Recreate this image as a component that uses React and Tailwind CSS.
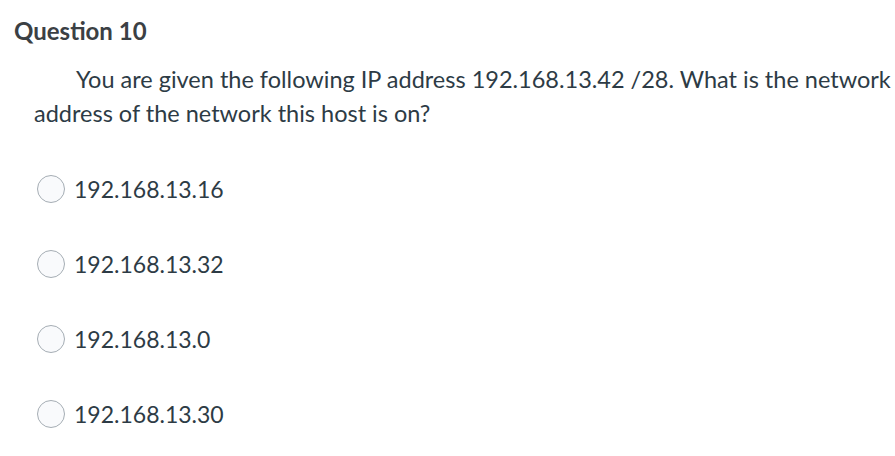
export default function App() {
  const options = ['192.168.13.16', '192.168.13.32', '192.168.13.0', '192.168.13.30'];
  return (
    <div className="w-[895px] h-[456px] bg-white text-[#2d3b45] font-['Lato',sans-serif] overflow-hidden">
      <h2 className="pl-[14px] pt-[16px] text-[24px] font-bold leading-[30px] text-[#3b4044]">Question 10</h2>
      <p className="pl-[34px] mt-[16px] text-[23.5px] leading-[34px] indent-[42px]">
        You are given the following IP address 192.168.13.42 /28. What is the network address of the network this host is on?
      </p>
      <div className="mt-[45px] pl-[37px] flex flex-col gap-[47px]">
        {options.map((o) => (
          <label key={o} className="flex items-center gap-[9px] h-[28px]">
            <span className="w-[28px] h-[28px] rounded-full border border-[#a5adb4] bg-[#f9fafc] shrink-0" />
            <span className="text-[23px] leading-[28px]">{o}</span>
          </label>
        ))}
      </div>
    </div>
  );
}
